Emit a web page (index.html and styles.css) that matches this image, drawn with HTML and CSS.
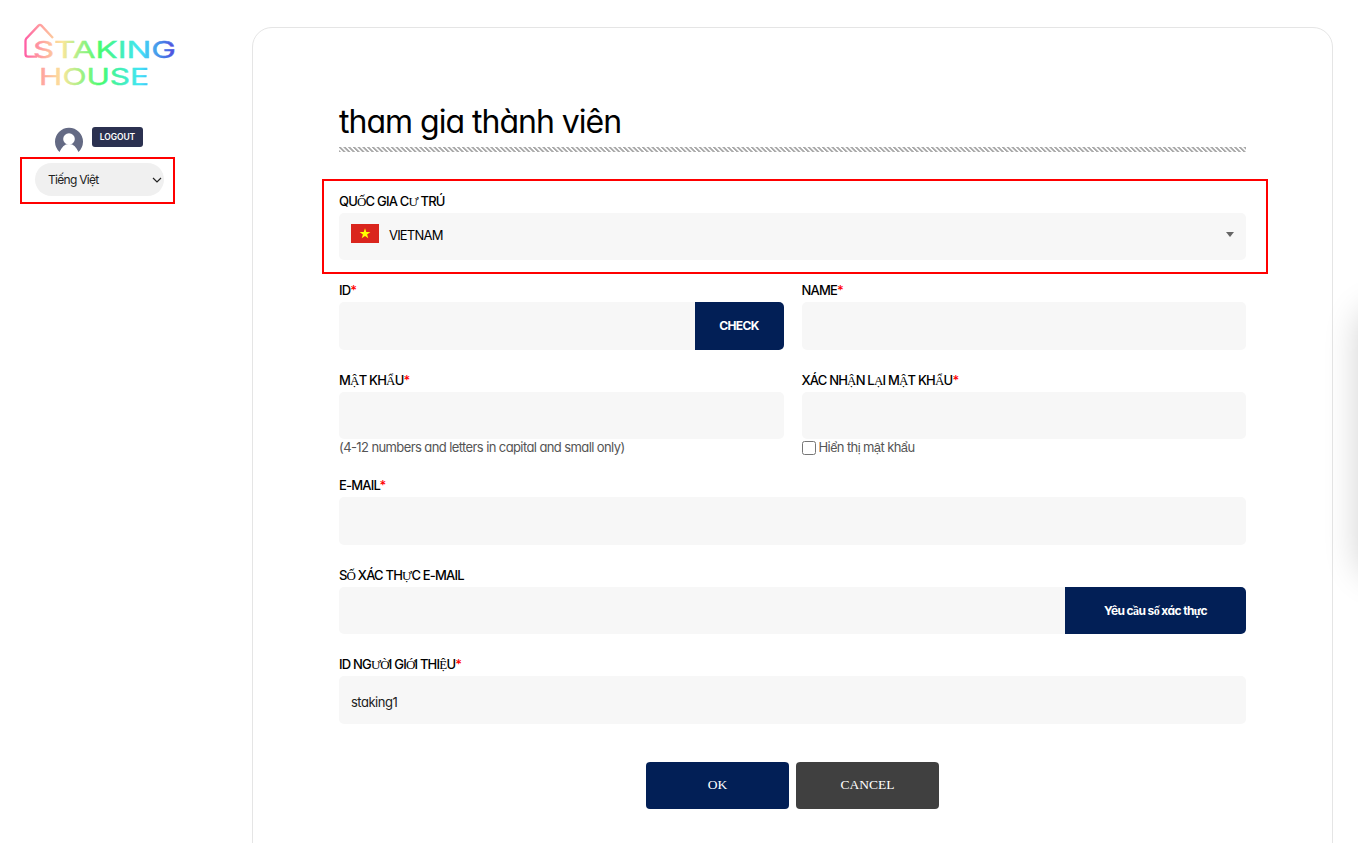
FILE: index.html
```html
<!DOCTYPE html>
<html lang="vi">
  <head>
    <meta charset="UTF-8" />
    <meta name="viewport" content="width=device-width, initial-scale=1.0" />
    <title>Staking House</title>
    <link rel="stylesheet" href="styles.css">
  </head>
  <body>
    <aside class="sidebar">
      <svg class="logo" width="156" height="66" viewBox="0 0 156 66">
        <defs>
          <linearGradient id="rainbow" gradientUnits="userSpaceOnUse" x1="1" y1="0" x2="154" y2="0">
            <stop offset="0" stop-color="#ff5aa5" />
            <stop offset="0.11" stop-color="#ffa0a0" />
            <stop offset="0.25" stop-color="#fbe69a" />
            <stop offset="0.5" stop-color="#48fb70" />
            <stop offset="0.76" stop-color="#40e4f8" />
            <stop offset="1" stop-color="#5040dc" />
          </linearGradient>
        </defs>
        <path d="M30 16 L18.500 3.600 Q17 2.200 15.500 3.600 L3.300 16.500 Q2.500 17.500 2.500 19 V32 Q2.500 34.700 5.200 34.700 H14" fill="none" stroke="url(#rainbow)" stroke-width="2.300" />
        <g fill="url(#rainbow)" stroke="url(#rainbow)" stroke-width="0.400">
          <text x="10" y="35.500" textLength="143" lengthAdjust="spacingAndGlyphs">STAKING</text>
          <text x="16" y="62.500" textLength="110" lengthAdjust="spacingAndGlyphs">HOUSE</text>
        </g>
      </svg>
      <div class="user">
        <svg class="avatar" width="28" height="26" viewBox="0 0 28 26">
          <path d="M4.500 25 A14 14 0 1 1 23.500 25 Q21 18.500 14 18.500 Q7 18.500 4.500 25Z" fill="#646a84" />
          <circle cx="14" cy="12" r="5.800" fill="#fff" />
          <path d="M5 26 Q7 17 14 17 Q21 17 23 26Z" fill="#fff" />
        </svg>
        <button class="logout">LOGOUT</button>
      </div>
      <div class="language marked">
        <button class="language-select">
          <span>Tiếng Việt</span>
          <svg width="10" height="6" viewBox="0 0 10 6"><path d="M1 1 L5 5 L9 1" fill="none" stroke="#222" stroke-width="1.200" /></svg>
        </button>
      </div>
    </aside>

    <main class="panel">
      <h1>tham gia thành viên</h1>
      <div class="hatch"></div>
      <form class="form">
        <div class="field country marked">
          <label class="w-country">QU<span class="alt">Ố</span>C GIA C<span class="alt">Ư</span> TRÚ</label>
          <div class="input country-select">
            <svg width="28" height="19" viewBox="0 0 28 19">
              <rect width="28" height="19" fill="#da251d" />
              <path d="M14 4.200 L15.300 8 H19.400 L16.100 10.400 L17.300 14.300 L14 11.900 L10.700 14.300 L11.900 10.400 L8.600 8 H12.700Z" fill="#ff0" />
            </svg>
            <span class="country-name">VIETNAM</span>
            <span class="caret"></span>
          </div>
        </div>
        <div class="row">
          <div class="field">
            <label>ID<b>*</b></label>
            <div class="input-group">
              <input class="input" type="text" />
              <button type="button" class="btn-check">CHECK</button>
            </div>
          </div>
          <div class="field">
            <label>NAME<b>*</b></label>
            <input class="input" type="text" />
          </div>
        </div>
        <div class="row">
          <div class="field">
            <label>M<span class="alt">Ậ</span>T KH<span class="alt">Ẩ</span>U<b>*</b></label>
            <input class="input" type="password" />
            <p class="hint">(4-12 numbers and letters in capital and small only)</p>
          </div>
          <div class="field">
            <label class="w-confirm">XÁC NH<span class="alt">Ậ</span>N L<span class="alt">Ạ</span>I M<span class="alt">Ậ</span>T KH<span class="alt">Ẩ</span>U<b>*</b></label>
            <input class="input" type="password" />
            <p class="hint show-password"><input type="checkbox" /><span>Hi<span class="alt-sans">ể</span>n th<span class="alt-sans">ị</span> m<span class="alt-sans">ậ</span>t kh<span class="alt-sans">ẩ</span>u</span></p>
          </div>
        </div>
        <div class="field">
          <label>E-MAIL<b>*</b></label>
          <input class="input" type="text" />
        </div>
        <div class="field">
          <label>S<span class="alt">Ố</span> XÁC TH<span class="alt">Ự</span>C E-MAIL</label>
          <div class="input-group">
            <input class="input" type="text" />
            <button type="button" class="btn-verify">Yêu c<span class="alt">ầ</span>u s<span class="alt">ố</span> xác th<span class="alt">ự</span>c</button>
          </div>
        </div>
        <div class="field">
          <label>ID NG<span class="alt">ƯỜ</span>I GI<span class="alt">Ớ</span>I THI<span class="alt">Ệ</span>U<b>*</b></label>
          <input class="input" type="text" value="staking1" />
        </div>
        <div class="actions">
          <button type="button" class="btn-ok">OK</button>
          <button type="button" class="btn-cancel">CANCEL</button>
        </div>
      </form>
    </main>
    <div class="side-drawer"></div>
  </body>
</html>
```
FILE: styles.css
```css
*,
*::before,
*::after {
  box-sizing: border-box;
}
:root {
  --clr-navy: #021f56;
  --clr-field: #f7f7f7;
  --clr-mark: #f00;
  --ff-base: Inter, "Liberation Sans", sans-serif;
  --ff-alt: "Liberation Serif", serif;
}
body {
  display: flex;
  position: relative;
  height: 843px;
  margin: 0;
  font-family: var(--ff-base);
  font-feature-settings: "cv11";
  color: #000;
  background-color: #fff;
  overflow: hidden;
}
button,
input {
  font: inherit;
  font-feature-settings: inherit;
  letter-spacing: inherit;
  border: 0;
  margin: 0;
  padding: 0;
}

/* sidebar */
.sidebar {
  flex: 0 0 252px;
  padding: 22px 0 0 23px;
}
.logo {
  display: block;
  font-size: 23px;
}
.user {
  display: flex;
  gap: 9px;
  padding: 39px 0 0 32px;
}
.logout {
  width: 51px;
  height: 20px;
  border-radius: 3px;
  background-color: #2b3150;
  color: #fff;
  font-size: 8.5px;
  font-weight: 600;
  letter-spacing: -0.1px;
}
.marked {
  position: relative;
}
.marked::after {
  content: "";
  position: absolute;
  border: 2px solid var(--clr-mark);
}
.language {
  padding: 10px 0 0 12px;
}
.language::after {
  left: -3px;
  top: 4px;
  width: 155px;
  height: 47px;
}
.language-select {
  display: flex;
  align-items: center;
  justify-content: space-between;
  width: 129px;
  height: 33px;
  padding: 0 2px 0 13px;
  border-radius: 17px;
  background-color: #f0f0f0;
  color: #222;
  font-size: 12px;
  letter-spacing: -0.7px;
}

/* panel */
.panel {
  flex: 0 0 1081px;
  height: 900px;
  margin-top: 27px;
  padding: 72px 86px 0;
  border: 1px solid #e5e5e5;
  border-radius: 20px;
}
h1 {
  margin: 0;
  font-size: 32px;
  line-height: 44px;
  font-weight: 400;
  letter-spacing: -1px;
  white-space: nowrap;
}
.hatch {
  height: 5px;
  margin-top: 3px;
  background: repeating-linear-gradient(45deg, #aaa 0, #aaa 1.1px, #fff 1.9px, #fff 2.7px, #aaa 3.35px);
}
.form {
  display: flex;
  flex-direction: column;
  gap: 18px;
  padding-top: 36.500px;
}
.row {
  display: grid;
  grid-template-columns: 1fr 1fr;
  gap: 18px;
}
.field {
  display: flex;
  flex-direction: column;
}
.country::after {
  left: -17px;
  top: -10px;
  width: 946px;
  height: 95px;
}
label {
  height: 24px;
  font-size: 13px;
  line-height: 24px;
  font-weight: 500;
  letter-spacing: -0.8px;
  white-space: nowrap;
}
label b {
  color: #f00;
  font-weight: 500;
}
.alt {
  font-family: var(--ff-alt);
  line-height: 1;
}
.alt-sans {
  font-family: "Liberation Sans", sans-serif;
  line-height: 1;
}
.input {
  width: 100%;
  height: 47.500px;
  padding: 4px 12px 0;
  border-radius: 5px;
  background-color: var(--clr-field);
  color: #222;
  font-size: 13px;
  letter-spacing: -0.5px;
}
.country-select {
  display: flex;
  gap: 10px;
  padding: 11px 12px 0;
}
.country-name {
  flex: 1;
  color: #000;
  line-height: 22px;
  letter-spacing: -0.8px;
}
.caret {
  width: 0;
  height: 0;
  margin-top: 8px;
  border: 4.500px solid transparent;
  border-top: 5px solid #666;
  border-bottom: 0;
}
.input-group {
  display: flex;
}
.input-group .input {
  flex: 1;
  min-width: 0;
  border-radius: 5px 0 0 5px;
}
.btn-check,
.btn-verify {
  width: 89px;
  border-radius: 0 5px 5px 0;
  background-color: var(--clr-navy);
  color: #fff;
  font-size: 12px;
  font-weight: 700;
  letter-spacing: -0.6px;
}
.btn-verify {
  width: 181px;
}
.hint {
  height: 16px;
  margin: 0;
  color: #555;
  font-size: 13px;
  line-height: 17px;
  letter-spacing: -0.6px;
  white-space: nowrap;
}
.show-password {
  display: flex;
  gap: 3px;
}
.show-password input {
  appearance: none;
  width: 14px;
  height: 14px;
  margin-top: 2px;
  border: 1px solid #767676;
  border-radius: 2.500px;
  background-color: #fff;
}
.actions {
  display: flex;
  justify-content: center;
  gap: 7px;
  padding-top: 20px;
}
.btn-ok,
.btn-cancel {
  width: 143px;
  height: 47.500px;
  border-radius: 4px;
  background-color: var(--clr-navy);
  color: #fff;
  font-family: var(--ff-alt);
  font-size: 13.500px;
}
.btn-cancel {
  background-color: #404040;
}

/* closed drawer, only its shadow reaches the page */
.side-drawer {
  position: absolute;
  left: 1360px;
  top: 310px;
  width: 200px;
  height: 265px;
  border-radius: 20px;
  box-shadow: 0 0 36px rgba(0, 0, 0, 0.2);
}
```
